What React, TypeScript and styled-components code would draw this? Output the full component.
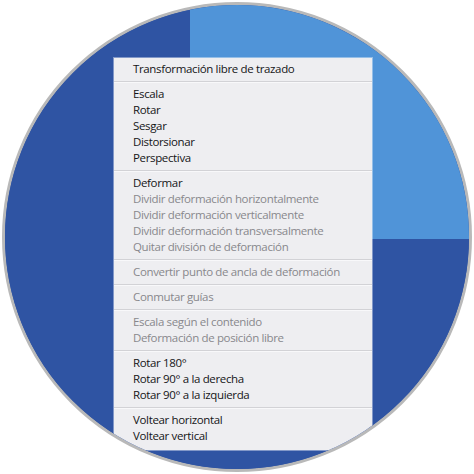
import React from 'react';
import styled, { createGlobalStyle } from 'styled-components';

interface IMenuItem {
  label: string;
  disabled?: boolean;
}

type MenuGroup = IMenuItem[];

const grupos: MenuGroup[] = [
  [{ label: 'Transformación libre de trazado' }],
  [
    { label: 'Escala' },
    { label: 'Rotar' },
    { label: 'Sesgar' },
    { label: 'Distorsionar' },
    { label: 'Perspectiva' },
  ],
  [
    { label: 'Deformar' },
    { label: 'Dividir deformación horizontalmente', disabled: true },
    { label: 'Dividir deformación verticalmente', disabled: true },
    { label: 'Dividir deformación transversalmente', disabled: true },
    { label: 'Quitar división de deformación', disabled: true },
  ],
  [{ label: 'Convertir punto de ancla de deformación', disabled: true }],
  [{ label: 'Conmutar guías', disabled: true }],
  [
    { label: 'Escala según el contenido', disabled: true },
    { label: 'Deformación de posición libre', disabled: true },
  ],
  [
    { label: 'Rotar 180°' },
    { label: 'Rotar 90° a la derecha' },
    { label: 'Rotar 90° a la izquierda' },
  ],
  [{ label: 'Voltear horizontal' }, { label: 'Voltear vertical' }],
];

const App: React.FC = () => {
  return (
    <>
      <GlobalStyle />
      <Stage>
        <Circle>
          <Canvas>
            <Panel tone="dark" />
            <Panel tone="light" />
            <Panel tone="dark" />
            <Panel tone="dark" />
          </Canvas>
          <Menu>
            {grupos.map((grupo, i) => (
              <React.Fragment key={i}>
                {i > 0 && <Separator />}
                {grupo.map((item) => (
                  <MenuItem key={item.label} disabled={item.disabled}>
                    {item.label}
                  </MenuItem>
                ))}
              </React.Fragment>
            ))}
          </Menu>
        </Circle>
      </Stage>
    </>
  );
};

const GlobalStyle = createGlobalStyle`
  html, body {
    margin: 0;
    padding: 0;
    background: #ffffff;
  }
`;

const Stage = styled.div`
  width: 474px;
  height: 474px;
  display: flex;
  align-items: center;
  justify-content: center;
  background: #ffffff;
`;

const Circle = styled.div`
  position: relative;
  width: 464px;
  height: 464px;
  border-radius: 50%;
  border: 3px solid #b9b9b9;
  overflow: hidden;
  background: #2f54a3;
`;

const Canvas = styled.div`
  display: grid;
  grid-template-columns: 185px 1fr;
  grid-template-rows: 234px 1fr;
  width: 100%;
  height: 100%;
`;

const Panel = styled.div<{ tone: 'dark' | 'light' }>`
  background: ${({ tone }) => (tone === 'light' ? '#5094d8' : '#2f54a3')};
`;

const Menu = styled.ul`
  position: absolute;
  left: 109px;
  top: 53px;
  width: 258px;
  margin: 0;
  padding: 3px 0 6px;
  list-style: none;
  background: #eeeef1;
  box-shadow: 0 0 0 1px rgba(255, 255, 255, 0.4);
  font-family: 'Open Sans', 'Liberation Sans', sans-serif;
  font-size: 11.5px;
  letter-spacing: -0.35px;
`;

const MenuItem = styled.li<{ disabled?: boolean }>`
  height: 16px;
  line-height: 16px;
  padding-left: 19px;
  white-space: nowrap;
  color: ${({ disabled }) => (disabled ? '#88888c' : '#151517')};
`;

const Separator = styled.li`
  height: 1px;
  margin: 4px 0 3px;
  background: #d2d2d6;
  border-bottom: 1px solid #f8f8fa;
`;

export default App;
